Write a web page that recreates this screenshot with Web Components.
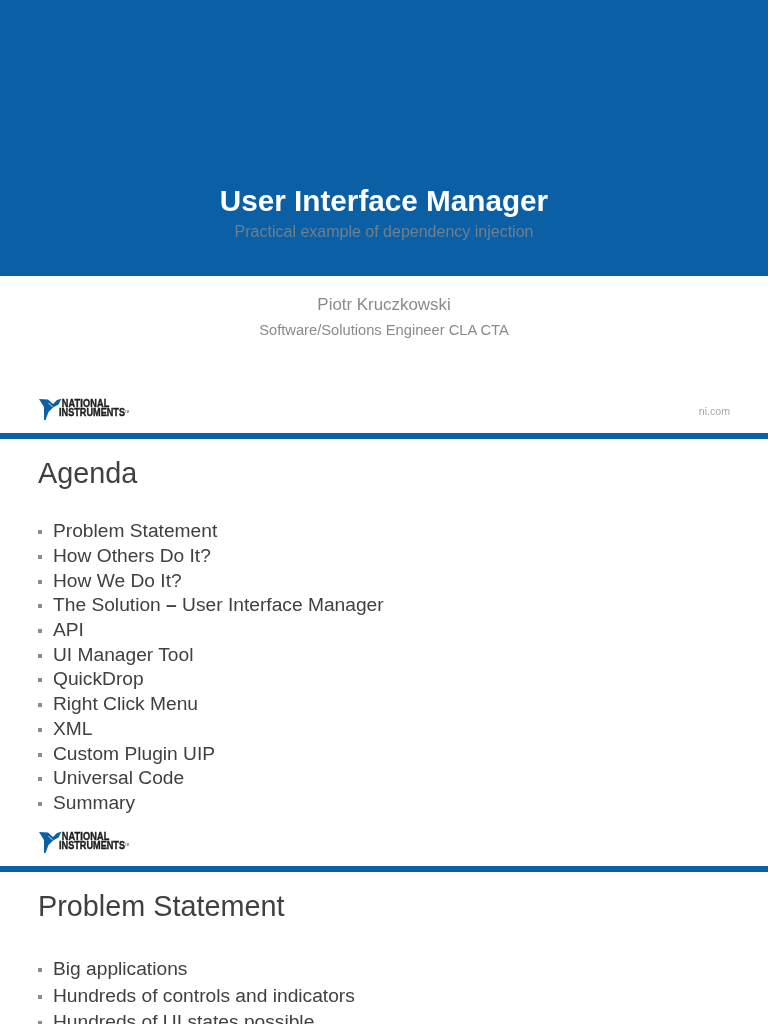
<!DOCTYPE html>
<html><head><meta charset="utf-8">
<style>
html,body{margin:0;padding:0;background:#fff;overflow:hidden;height:1024px}
body{font-family:"Liberation Sans",Arial,sans-serif}
</style></head>
<body>
<title-slide heading="User Interface Manager" sub="Practical example of dependency injection" author="Piotr Kruczkowski" role="Software/Solutions Engineer CLA CTA"></title-slide>
<content-slide heading="Agenda" h="433" gap="26" pitch="24.7">
<bullet-item>Problem Statement</bullet-item>
<bullet-item>How Others Do It?</bullet-item>
<bullet-item>How We Do It?</bullet-item>
<bullet-item>The Solution <b>–</b> User Interface Manager</bullet-item>
<bullet-item>API</bullet-item>
<bullet-item>UI Manager Tool</bullet-item>
<bullet-item>QuickDrop</bullet-item>
<bullet-item>Right Click Menu</bullet-item>
<bullet-item>XML</bullet-item>
<bullet-item>Custom Plugin UIP</bullet-item>
<bullet-item>Universal Code</bullet-item>
<bullet-item>Summary</bullet-item>
</content-slide>
<content-slide heading="Problem Statement" h="152" gap="30" pitch="26.6" nofoot>
<bullet-item>Big applications</bullet-item>
<bullet-item>Hundreds of controls and indicators</bullet-item>
<bullet-item>Hundreds of UI states possible</bullet-item>
</content-slide>
<script>
const LOGO=`<svg width="24" height="22" viewBox="0 0 24 22" style="flex:none"><path fill="#0b5fa5" d="M1 1 L10 1.5 L15 6 L19 2 L23.5 .8 L20.5 6.5 L15 9.5 L10.5 14 L7.5 22 L6 22 L6 9 Z"/><path stroke="#fff" stroke-width=".8" fill="none" d="M10.5 5 L14.5 9"/></svg>`;
class NiLogo extends HTMLElement{constructor(){super();this.attachShadow({mode:'open'}).innerHTML=`<style>
:host{display:flex;align-items:flex-start;height:22px;width:92px;filter:blur(.35px);text-align:left}
.t{font:700 10.4px/8.6px "Liberation Sans",sans-serif;color:#1c1c1c;-webkit-text-stroke:.4px #1c1c1c;margin:1.5px 0 0 -3px;transform:scaleX(.88);transform-origin:left top}
.l{display:block;white-space:nowrap}
.l1{margin-left:3px;letter-spacing:.2px}
sup{font-size:3px;font-weight:400;vertical-align:3px;-webkit-text-stroke:0}
</style>${LOGO}<div class="t"><span class="l l1">NATIONAL</span><span class="l">INSTRUMENTS<sup>TM</sup></span></div>`}}
customElements.define('ni-logo',NiLogo);
class BlueRule extends HTMLElement{constructor(){super();this.attachShadow({mode:'open'}).innerHTML=`<style>:host{display:block;height:6px;background:#0b5fa5}</style>`}}
customElements.define('blue-rule',BlueRule);
class TitleSlide extends HTMLElement{connectedCallback(){if(this.shadowRoot)return;const a=n=>this.getAttribute(n);this.attachShadow({mode:'open'}).innerHTML=`<style>
:host{display:flex;flex-direction:column;height:439px;text-align:center}
.hero{height:276px;background:#0b5fa5;display:flex;flex-direction:column;justify-content:flex-end;padding-bottom:34px;box-sizing:border-box}
h1{margin:0;font:700 29.7px/34px "Liberation Sans",sans-serif;color:#fff;filter:blur(.3px)}
.sub{font:16px/20px "Liberation Sans",sans-serif;color:#6f7f8e;margin-top:4px;filter:blur(.3px)}
.who{flex:1;display:flex;flex-direction:column;padding-top:19px;color:#8a8a8a}
.n{font:16.9px/20px "Liberation Sans",sans-serif;filter:blur(.3px)}
.r{font:14.7px/18px "Liberation Sans",sans-serif;margin-top:6px;filter:blur(.3px)}
.foot{display:flex;justify-content:space-between;align-items:flex-start;padding:0 38px;height:22px;margin-top:auto;margin-bottom:13px}
.com{font:10.6px/12px "Liberation Sans",sans-serif;color:#a8a8a8;margin-top:7px;filter:blur(.3px)}
</style><div class="hero"><h1>${a('heading')}</h1><div class="sub">${a('sub')}</div></div>
<div class="who"><div class="n">${a('author')}</div><div class="r">${a('role')}</div>
<div class="foot"><ni-logo></ni-logo><span class="com">ni.com</span></div></div><blue-rule></blue-rule>`}}
customElements.define('title-slide',TitleSlide);
class ContentSlide extends HTMLElement{connectedCallback(){if(this.shadowRoot)return;const a=n=>this.getAttribute(n);const nf=this.hasAttribute('nofoot');this.attachShadow({mode:'open'}).innerHTML=`<style>
:host{display:flex;flex-direction:column;box-sizing:border-box;height:${a('h')}px;padding:0 38px;overflow:hidden;--pitch:${a('pitch')}px}
h2{margin:14px 0 0;font:400 28.8px/40px "Liberation Sans",sans-serif;color:#404040;filter:blur(.3px)}
.list{margin-top:${a('gap')}px;display:flex;flex-direction:column}
.foot{margin-top:auto;margin-bottom:13px;height:22px;display:flex}
.rule{margin:0 -38px}
</style><h2>${a('heading')}</h2><div class="list"><slot></slot></div>${nf?'':'<div class="foot"><ni-logo></ni-logo></div><blue-rule class="rule"></blue-rule>'}`}}
customElements.define('content-slide',ContentSlide);
class BulletItem extends HTMLElement{constructor(){super();this.attachShadow({mode:'open'}).innerHTML=`<style>
:host{display:flex;align-items:center;height:var(--pitch);flex:none;font:19.2px/24px "Liberation Sans",sans-serif;color:#404040;white-space:nowrap;filter:blur(.3px)}
i{width:4px;height:4px;background:#8c8c8c;margin-right:11px;flex:none;margin-top:2px}
</style><i></i><span><slot></slot></span>`}}
customElements.define('bullet-item',BulletItem);
</script>
</body></html>
